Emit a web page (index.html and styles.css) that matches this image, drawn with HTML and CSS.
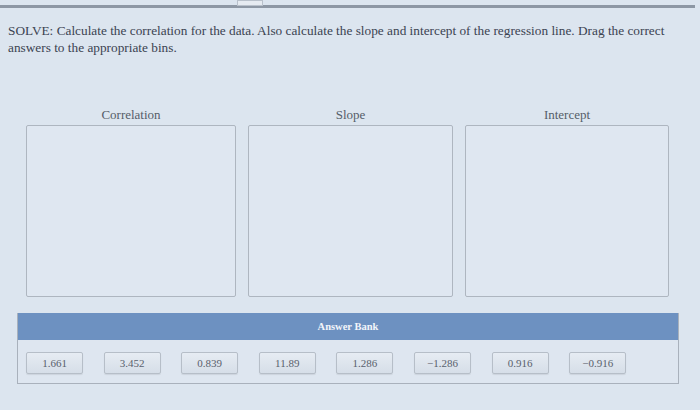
FILE: index.html
```html
<!DOCTYPE html>
<html lang="en">
<head>
  <meta charset="UTF-8">
  <title>Correlation and regression</title>
  <link rel="stylesheet" href="styles.css">
</head>
<body>
  <div class="top-rule"><span class="tab"></span></div>

  <p class="question">
    SOLVE: Calculate the correlation for the data. Also calculate the slope and intercept of the regression line. Drag the correct
    answers to the appropriate bins.
  </p>

  <div class="bins">
    <div class="bin">
      <div class="bin-label">Correlation</div>
      <div class="bin-box"></div>
    </div>
    <div class="bin">
      <div class="bin-label">Slope</div>
      <div class="bin-box"></div>
    </div>
    <div class="bin">
      <div class="bin-label">Intercept</div>
      <div class="bin-box"></div>
    </div>
  </div>

  <div class="bank">
    <div class="bank-head">Answer Bank</div>
    <div class="bank-items">
      <div class="chip">1.661</div>
      <div class="chip">3.452</div>
      <div class="chip">0.839</div>
      <div class="chip">11.89</div>
      <div class="chip">1.286</div>
      <div class="chip">&minus;1.286</div>
      <div class="chip">0.916</div>
      <div class="chip">&minus;0.916</div>
    </div>
  </div>
</body>
</html>
```

FILE: styles.css
```css
body {
  margin: 0;
  width: 700px;
  height: 410px;
  overflow: hidden;
  background: #dce5ef;
  font-family: "Liberation Serif", "Times New Roman", serif;
  color: #3b4351;
}

.top-rule {
  position: relative;
  margin: 5px 5px 0 0;
  height: 3px;
  background: #8d97a4;
}

.top-rule .tab {
  position: absolute;
  left: 237px;
  top: -5px;
  width: 24px;
  height: 4px;
  background: #e6ebf1;
  border: 1px solid #b9c1cb;
}

.question {
  margin: 14px 0 0 8px;
  width: 668px;
  font-size: 13.3px;
  line-height: 17px;
}

.bins {
  display: grid;
  grid-template-columns: 210px 205px 204px;
  column-gap: 12px;
  margin: 52px 0 0 26px;
}

.bin-label {
  text-align: center;
  font-size: 13px;
  color: #555d69;
  height: 17px;
  line-height: 14px;
}

.bin-box {
  height: 170px;
  border: 1px solid #aeb6c0;
  border-radius: 2px;
  background: #dfe7f1;
}

.bank {
  margin: 16px 0 0 17px;
  width: 660px;
  border: 1px solid #a9b1bc;
  border-top: none;
  background: #dee6f0;
}

.bank-head {
  height: 27px;
  line-height: 27px;
  background: #6d91c1;
  color: #f2f5fa;
  text-align: center;
  font-size: 10.5px;
  font-weight: bold;
}

.bank-items {
  display: flex;
  gap: 20.6px;
  padding: 12px 0 9px 8px;
}

.chip {
  width: 55px;
  height: 20px;
  line-height: 20px;
  text-align: center;
  font-size: 11px;
  color: #59616c;
  border: 1px solid #b6bec8;
  border-radius: 2px;
  background: linear-gradient(#e6ecf3, #d6dee8);
  box-shadow: 0 1px 1px rgba(0, 0, 0, 0.08);
}
```
